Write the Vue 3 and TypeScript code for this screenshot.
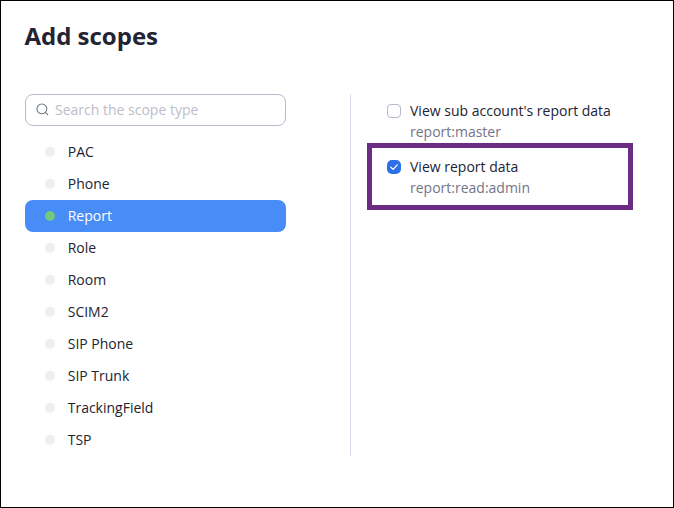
<script setup lang="ts">
const types: string[] = ['PAC', 'Phone', 'Report', 'Role', 'Room', 'SCIM2', 'SIP Phone', 'SIP Trunk', 'TrackingField', 'TSP']
const scopes = [
  { title: "View sub account's report data", code: 'report:master', checked: false },
  { title: 'View report data', code: 'report:read:admin', checked: true },
]
</script>

<template>
  <div class="frame">
    <h1 class="title">Add scopes</h1>
    <div class="body">
      <div class="left">
        <div class="search">
          <svg class="search-icon" width="13" height="13" viewBox="0 0 14 14" fill="none">
            <circle cx="6.3" cy="6.3" r="5.3" stroke="#6e7680" stroke-width="1.1" />
            <path d="M10.2 10.2 L12.6 12.6" stroke="#6e7680" stroke-width="1.1" stroke-linecap="round" />
          </svg>
          <span class="placeholder">Search the scope type</span>
        </div>
        <ul class="types">
          <li v-for="t in types" :key="t" class="type" :class="{ active: t === 'Report' }">
            <span class="dot"></span>
            <span class="label">{{ t }}</span>
          </li>
        </ul>
      </div>
      <div class="right">
        <div v-for="s in scopes" :key="s.code" class="scope" :class="{ marked: s.checked }">
          <span class="box" :class="{ on: s.checked }">
            <svg v-if="s.checked" width="14" height="14" viewBox="0 0 14 14" fill="none">
              <path d="M3.8 7.2 L6.1 9.4 L10.3 4.9" stroke="#fff" stroke-width="1.3" stroke-linecap="round" stroke-linejoin="round" />
            </svg>
          </span>
          <div>
            <div class="scope-title">{{ s.title }}</div>
            <div class="scope-code">{{ s.code }}</div>
          </div>
        </div>
      </div>
    </div>
  </div>
</template>

<style>
html, body { margin: 0; background: #fff; }
</style>

<style scoped>
.frame {
  box-sizing: border-box;
  width: 674px;
  height: 508px;
  border: 1px solid #000;
  padding: 0 24px;
  font-family: "Open Sans", sans-serif;
  color: #23232f;
  background: #fff;
  overflow: hidden;
}
.title {
  margin: 18px 0 0 -0.6px;
  font-size: 24px;
  line-height: 33px;
  font-weight: 700;
  color: #232333;
}
.body {
  display: flex;
  margin-top: 42px;
}
.left {
  width: 261px;
  flex: none;
}
.search {
  box-sizing: border-box;
  height: 32px;
  display: flex;
  align-items: center;
  gap: 6px;
  padding-left: 10px;
  border: 1px solid #bab8ca;
  border-radius: 8px;
}
.search-icon {
  flex: none;
  margin-top: -1px;
}
.placeholder {
  font-size: 14px;
  line-height: 20px;
  color: #bdbdc9;
}
.types {
  list-style: none;
  margin: 10px 0 0;
  padding: 0;
}
.type {
  display: flex;
  align-items: center;
  height: 32px;
  padding-left: 20px;
  gap: 13px;
  font-size: 14px;
  border-radius: 8px;
}
.label {
  line-height: 20px;
  margin-left: -0.3px;
}
.dot {
  width: 10px;
  height: 10px;
  border-radius: 50%;
  background: #ededf4;
}
.active {
  background: #488cf8;
  color: #fff;
}
.active .dot { background: #72c97e; }
.right {
  margin-left: 64px;
  width: 283px;
  height: 362px;
  box-sizing: border-box;
  border-left: 1px solid #dcdcee;
  padding-left: 36px;
}
.scope {
  display: flex;
  gap: 9px;
  height: 56px;
  padding-top: 7px;
  box-sizing: border-box;
  position: relative;
}
.marked::after {
  content: "";
  position: absolute;
  left: -20px;
  top: -7px;
  width: 266px;
  height: 67px;
  box-sizing: border-box;
  border: 5px solid #6b2d84;
}
.box {
  box-sizing: border-box;
  flex: none;
  width: 14px;
  height: 14px;
  margin-top: 3px;
  border: 1px solid #bab8ca;
  border-radius: 4px;
  background: #fff;
}
.box.on {
  border: none;
  border-radius: 5px;
  background: #2d6fe8;
}
.box svg { display: block; }
.scope-title {
  font-size: 14px;
  line-height: 20px;
  color: #232333;
}
.scope-code {
  font-size: 14px;
  line-height: 20px;
  margin-top: 1px;
  color: #747487;
}
</style>
